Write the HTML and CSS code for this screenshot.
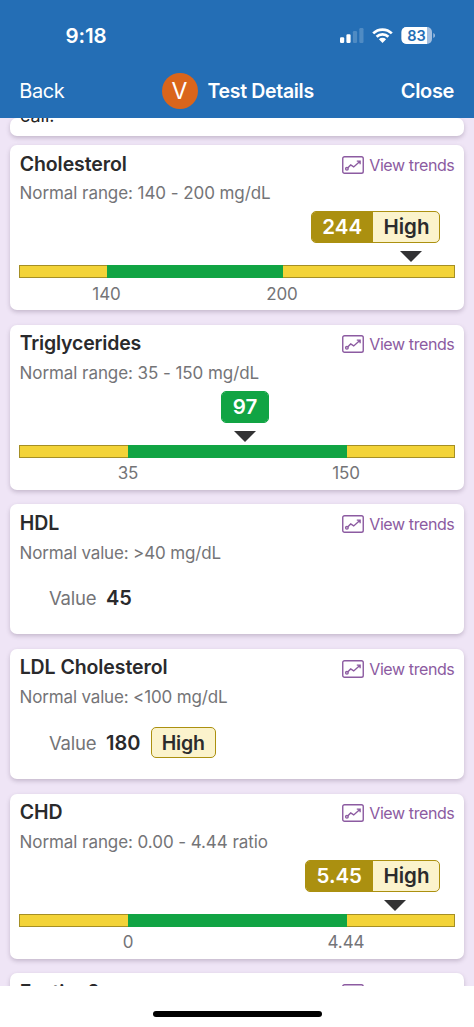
FILE: index.html
```
<!DOCTYPE html>
<html lang="en">
<head>
<meta charset="utf-8">
<meta name="viewport" content="width=device-width, initial-scale=1">
<title>Test Details</title>
<link rel="stylesheet" href="styles.css">
</head>
<body>
<svg class="defs" width="0" height="0">
  <symbol id="trend" viewBox="0 0 22 18">
    <rect x=".75" y=".75" width="20.5" height="16.5" rx="1.8"/>
    <circle cx="4.9" cy="12.8" r="1.3"/>
    <path d="M5.9 11.8 L8.7 8.9 L11.7 10.9 L17.8 5.4 M14.8 5.1 H18.1 V8.3"/>
  </symbol>
</svg>
<div class="screen">
  <header class="header">
    <div class="status">
      <span class="time">9:18</span>
      <svg class="indicators" width="96" height="18" viewBox="0 0 96 18">
        <g fill="#fff">
          <rect x="0" y="10.2" width="4.2" height="5.8" rx="1.2"/>
          <rect x="6.4" y="7.2" width="4.2" height="8.8" rx="1.2"/>
          <rect x="12.9" y="4" width="4.2" height="12" rx="1.2" opacity=".2"/>
          <rect x="19.3" y="1" width="4.2" height="15" rx="1.2" opacity=".2"/>
        </g>
        <g fill="none" stroke="#fff" stroke-width="2.7">
          <path d="M33.2 6.4 A13.2 13.2 0 0 1 51.8 6.4"/>
          <path d="M36.6 9.8 A8.4 8.4 0 0 1 48.4 9.8"/>
        </g>
        <path fill="#fff" d="M38.9 12.3 A5.1 5.1 0 0 1 46.1 12.3 L42.5 15.9 Z"/>
        <rect x="61.5" y="0" width="30.5" height="17" rx="5" fill="#a3bfe0"/>
        <path fill="#fff" d="M66.5 0 H87 V17 H66.5 A5 5 0 0 1 61.5 12 V5 A5 5 0 0 1 66.5 0Z"/>
        <path fill="#a3bfe0" d="M93.3 6 C95.5 6.7 95.5 10.3 93.3 11Z"/>
        <text class="battery" x="67.3" y="13.7">83</text>
      </svg>
    </div>
    <nav class="nav">
      <span class="back">Back</span>
      <span class="heading"><span class="avatar">V</span><span class="title">Test Details</span></span>
      <span class="close">Close</span>
    </nav>
  </header>

  <main class="results">
    <section class="card note"><p class="note-text">call.</p></section>

    <section class="card ranged">
      <div class="head"><h2 class="name">Cholesterol</h2><a class="trends"><svg class="icon"><use href="#trend"/></svg><span>View trends</span></a></div>
      <p class="normal">Normal range: 140 - 200 mg/dL</p>
      <div class="gauge">
        <div class="badge" style="margin-left:292px"><b class="num">244</b><span class="flag">High</span></div>
        <i class="pointer" style="margin-left:381px"></i>
        <div class="bar"><i class="ok" style="margin-left:87px;width:176px"></i></div>
        <div class="ticks"><span style="width:175px">140</span><span style="width:176px">200</span></div>
      </div>
    </section>

    <section class="card ranged">
      <div class="head"><h2 class="name tight">Triglycerides</h2><a class="trends"><svg class="icon"><use href="#trend"/></svg><span>View trends</span></a></div>
      <p class="normal">Normal range: 35 - 150 mg/dL</p>
      <div class="gauge">
        <div class="badge good" style="margin-left:202px"><b class="num">97</b></div>
        <i class="pointer" style="margin-left:215.5px"></i>
        <div class="bar"><i class="ok" style="margin-left:108px;width:219px"></i></div>
        <div class="ticks"><span style="width:218px">35</span><span style="width:218px">150</span></div>
      </div>
    </section>

    <section class="card single">
      <div class="head"><h2 class="name">HDL</h2><a class="trends"><svg class="icon"><use href="#trend"/></svg><span>View trends</span></a></div>
      <p class="normal value-range">Normal value: &gt;40 mg/dL</p>
      <div class="value"><span>Value</span><b class="reading">45</b></div>
    </section>

    <section class="card single">
      <div class="head"><h2 class="name">LDL Cholesterol</h2><a class="trends"><svg class="icon"><use href="#trend"/></svg><span>View trends</span></a></div>
      <p class="normal value-range">Normal value: &lt;100 mg/dL</p>
      <div class="value"><span>Value</span><b class="reading">180</b><span class="tag">High</span></div>
    </section>

    <section class="card ranged">
      <div class="head"><h2 class="name">CHD</h2><a class="trends"><svg class="icon"><use href="#trend"/></svg><span>View trends</span></a></div>
      <p class="normal">Normal range: 0.00 - 4.44 ratio</p>
      <div class="gauge">
        <div class="badge wide" style="margin-left:286px"><b class="num">5.45</b><span class="flag">High</span></div>
        <i class="pointer" style="margin-left:365.5px"></i>
        <div class="bar"><i class="ok" style="margin-left:108px;width:219px"></i></div>
        <div class="ticks"><span style="width:218px">0</span><span style="width:218px">4.44</span></div>
      </div>
    </section>

    <section class="card single">
      <div class="head"><h2 class="name">Fasting?</h2><a class="trends"><svg class="icon"><use href="#trend"/></svg><span>View trends</span></a></div>
    </section>
  </main>

  <footer class="footer"><div class="home"></div></footer>
</div>
</body>
</html>
```
FILE: styles.css
```
* { box-sizing: border-box; }
body { margin: 0; font-family: Inter, "Liberation Sans", sans-serif; background: #fff; }
h2, p { margin: 0; }
.defs { position: absolute; }
.screen { width: 474px; height: 1027px; display: flex; flex-direction: column; overflow: hidden; }

.header { height: 118px; flex: none; background: #246eb5; color: #fff; }
.status { height: 64px; padding: 7px 40px 0 65.5px; display: flex; align-items: center; justify-content: space-between; }
.time { font-size: 20.5px; font-weight: 600; letter-spacing: -.1px; }
.battery { font-size: 14.5px; font-weight: 600; fill: #246eb5; }
.indicators { flex: none; margin-right: -2px; }
.nav { height: 54px; padding: 0 20px 0 19.3px; display: grid; grid-template-columns: 1fr auto 1fr; align-items: center; }
.back { font-size: 20px; letter-spacing: -.4px; }
.heading { display: flex; align-items: center; gap: 10px; margin-left: 2px; }
.avatar { width: 36px; height: 36px; border-radius: 50%; background: #da651b; font-size: 23px; display: grid; place-items: center; }
.title { font-size: 19.5px; font-weight: 600; letter-spacing: -.32px; }
.close { font-size: 20px; font-weight: 600; letter-spacing: -.35px; justify-self: end; }

.results { height: 867.7px; flex: none; overflow: hidden; background: #efe5f6; padding: 0 9.7px; display: flex; flex-direction: column; gap: 14.6px; }
.card { flex: none; background: #fff; border-radius: 7px; padding: 6px 9.5px 0 9.3px; box-shadow: 0 2px 4px rgba(70, 50, 85, .25); }
.note { height: 17.5px; margin-bottom: -5px; padding-top: 0; }
.note-text { font-size: 18px; line-height: 22px; margin: -13px 0 0 1px; color: #222; }
.ranged { height: 165px; }
.single { height: 130.1px; }
.head { height: 25px; display: flex; align-items: center; justify-content: space-between; }
.name { margin-left: .7px; padding-top: 1px; font-size: 19.5px; font-weight: 600; line-height: 25px; letter-spacing: -.08px; color: #2a2a2c; white-space: nowrap; }
.tight { letter-spacing: -.18px; }
.trends { display: flex; align-items: center; gap: 5px; color: #8c5ba1; font-size: 16px; letter-spacing: -.4px; padding: 2.5px .4px 0 0; }
.icon { width: 22px; height: 18px; fill: none; stroke: #8c5ba1; stroke-width: 1.4; }
.normal { height: 24px; margin: 5.3px 0 -.3px .6px; font-size: 17px; line-height: 24px; letter-spacing: -.07px; color: #747477; white-space: nowrap; }
.value-range { letter-spacing: -.16px; }

.gauge { margin-top: 6px; display: flex; flex-direction: column; align-items: flex-start; }
.badge { height: 32px; display: flex; border: 1px solid #ab9010; border-radius: 5px; overflow: hidden; background: #fbf3cc; font-size: 20.5px; line-height: 30px; font-weight: 600; width: 129.5px; }
.badge.wide { width: 135.5px; }
.badge.good { width: 48px; border-color: #11a444; }
.num { flex: 1; text-align: center; background: #ab9010; color: #fff; font-weight: 600; }
.good .num { background: #11a444; }
.flag { width: 67px; text-align: center; border-left: 1px solid #ab9010; color: #2b2b2d; }
.pointer { margin-top: 8px; border-left: 11px solid transparent; border-right: 11px solid transparent; border-top: 11px solid #323234; }
.bar { width: 436.5px; height: 13px; margin-top: 3px; border: 1px solid #a58f24; background: #f3d338; }
.ok { display: block; height: 13px; margin-top: -1px; background: #11a444; }
.ticks { height: 24px; margin-top: 3.5px; display: flex; font-size: 17px; line-height: 24px; letter-spacing: -.1px; color: #747477; text-align: center; }

.value { margin: 17px 0 0 30px; height: 34px; display: flex; align-items: center; font-size: 18.5px; letter-spacing: -.2px; color: #747477; }
.reading { margin-left: 9.5px; font-size: 20px; font-weight: 600; letter-spacing: .05px; color: #2a2a2c; }
.tag { margin-left: 10px; width: 65.5px; height: 31px; border: 1px solid #ab9010; border-radius: 5px; background: #fbf3cc; color: #2b2b2d; font-size: 19.5px; line-height: 30px; font-weight: 600; text-align: center; }

.footer { flex: 1; display: flex; justify-content: center; padding-top: 25.3px; }
.home { width: 169px; height: 6px; border-radius: 3px; background: #000; }
```
